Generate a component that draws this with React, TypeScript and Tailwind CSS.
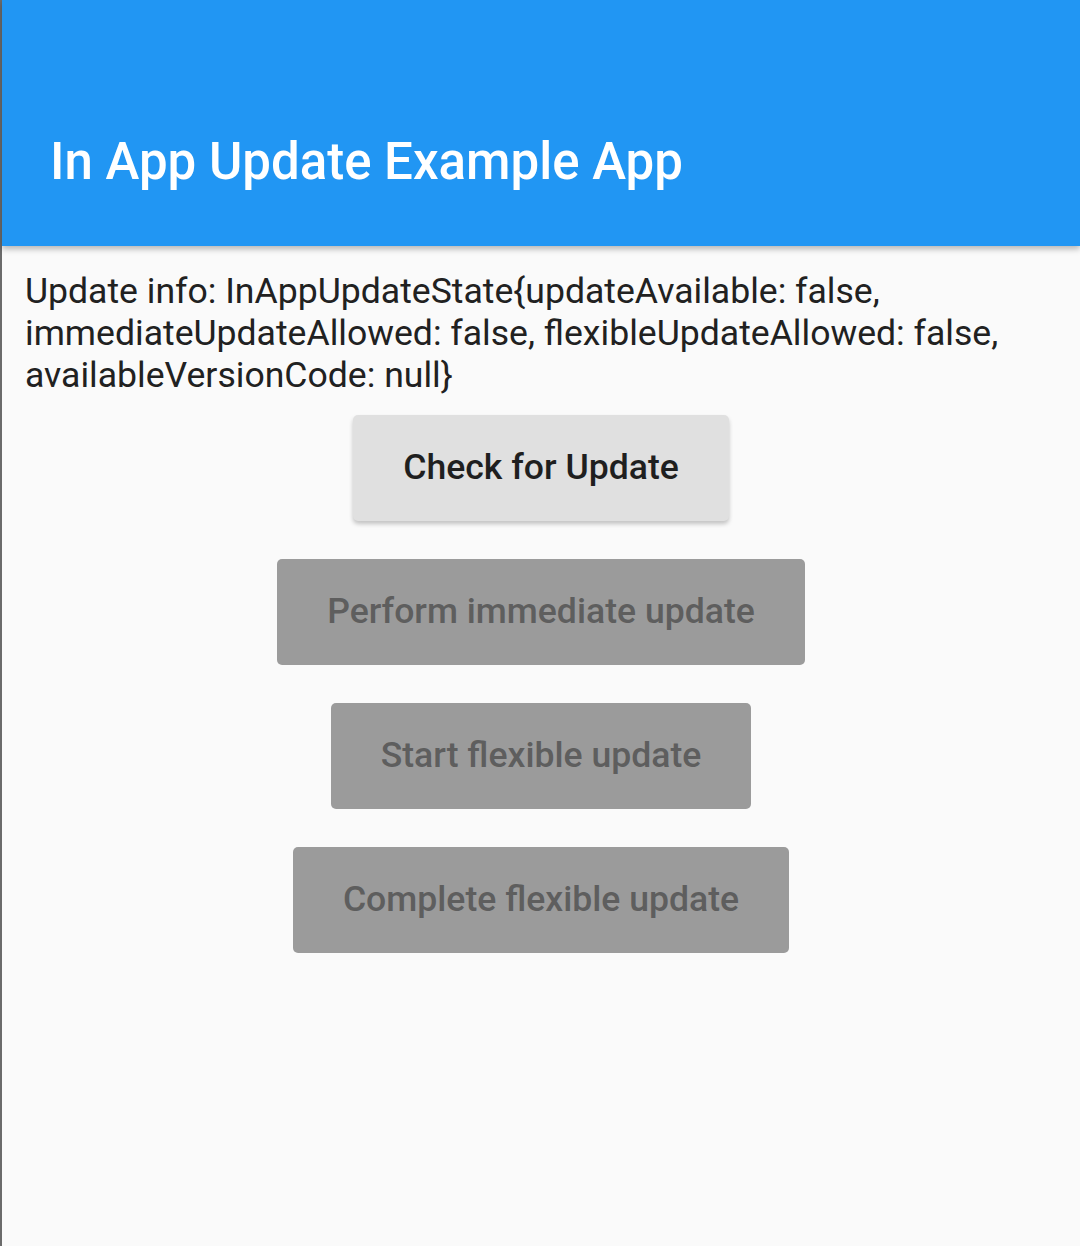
const INFO =
  'Update info: InAppUpdateState{updateAvailable: false, immediateUpdateAllowed: false, flexibleUpdateAllowed: false, availableVersionCode: null}';

export default function App() {
  const disabled = ['Perform immediate update', 'Start flexible update', 'Complete flexible update'];

  return (
    <div className="min-h-[1246px] bg-[#fafafa] border-l-2 border-[#6b6b6b] font-['Roboto',sans-serif]">
      <header className="relative z-10 h-[246px] bg-[#2196f3] pt-[132px] pl-[48px] shadow-[0_3px_6px_rgba(0,0,0,0.28)]">
        <h1 className="text-[51px] leading-[60px] font-medium text-white">In App Update Example App</h1>
      </header>

      <main className="flex flex-col items-center px-[23px] pt-[24px]">
        <p className="self-stretch text-[35.6px] leading-[42px] text-[#212121]">{INFO}</p>

        <button
          type="button"
          className="mt-[19px] h-[106px] px-[50px] rounded-[5px] bg-[#e0e0e0] text-[35.6px] font-medium text-[#1f1f1f] shadow-[0_3px_4px_rgba(0,0,0,0.22)]"
        >
          Check for Update
        </button>

        {disabled.map((label) => (
          <button
            key={label}
            type="button"
            disabled
            className="mt-[38px] h-[106px] px-[50px] rounded-[5px] bg-[#9b9b9b] text-[35.6px] font-medium text-[#5e5e5e]"
          >
            {label}
          </button>
        ))}
      </main>
    </div>
  );
}
